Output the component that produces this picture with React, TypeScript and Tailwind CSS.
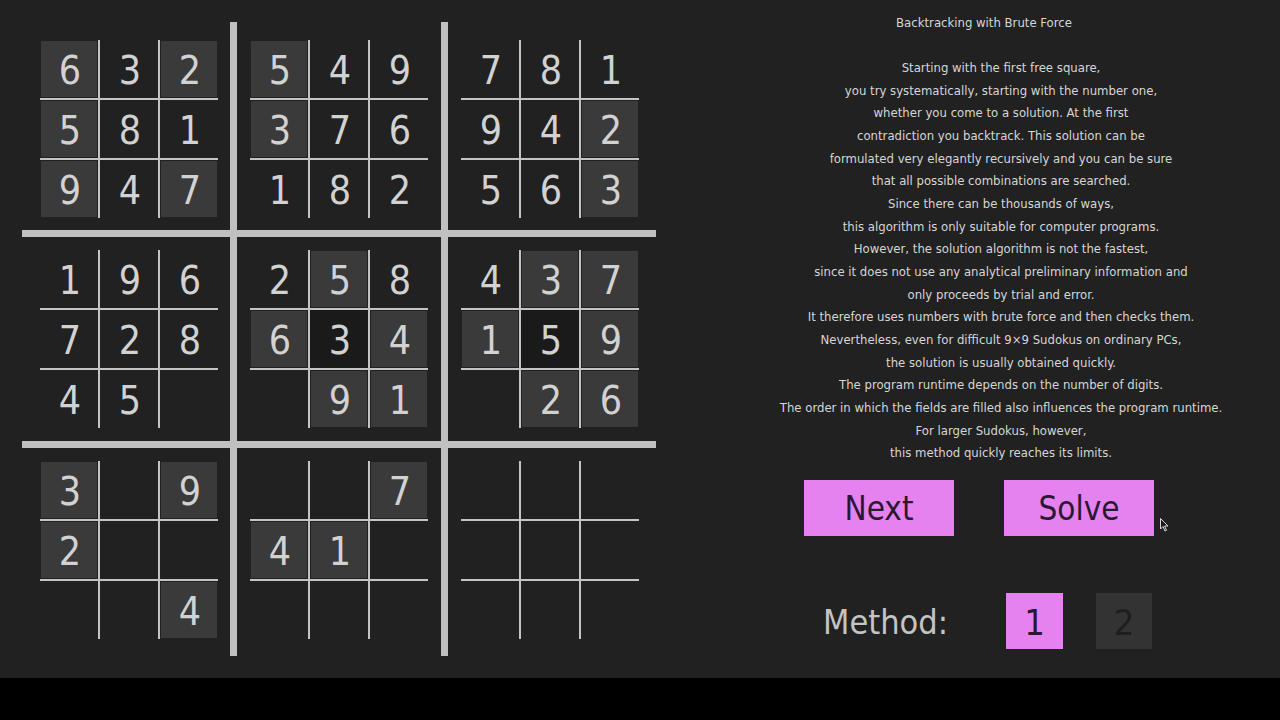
const blocks: string[][] = [
  ["6*", "3", "2*", "5*", "8", "1", "9*", "4", "7*"],
  ["5*", "4", "9", "3*", "7", "6", "1", "8", "2"],
  ["7", "8", "1", "9", "4", "2*", "5", "6", "3*"],
  ["1", "9", "6", "7", "2", "8", "4", "5", ""],
  ["2", "5*", "8", "6*", "3!", "4*", "", "9*", "1*"],
  ["4", "3*", "7*", "1*", "5!", "9*", "", "2*", "6*"],
  ["3*", "", "9*", "2*", "", "", "", "", "4*"],
  ["", "", "7*", "4*", "1*", "", "", "", ""],
  ["", "", "", "", "", "", "", "", ""],
];

const text = [
  "Starting with the first free square,",
  "you try systematically, starting with the number one,",
  "whether you come to a solution. At the first",
  "contradiction you backtrack. This solution can be",
  "formulated very elegantly recursively and you can be sure",
  "that all possible combinations are searched.",
  "Since there can be thousands of ways,",
  "this algorithm is only suitable for computer programs.",
  "However, the solution algorithm is not the fastest,",
  "since it does not use any analytical preliminary information and",
  "only proceeds by trial and error.",
  "It therefore uses numbers with brute force and then checks them.",
  "Nevertheless, even for difficult 9×9 Sudokus on ordinary PCs,",
  "the solution is usually obtained quickly.",
  "The program runtime depends on the number of digits.",
  "The order in which the fields are filled also influences the program runtime.",
  "For larger Sudokus, however,",
  "this method quickly reaches its limits.",
];

const Block = ({ cells, pad }: { cells: string[]; pad: string }) => (
  <div className={pad}>
    <div className="grid grid-cols-[58px_58px_58px] grid-rows-[58px_58px_58px] gap-[2px] bg-[#c4c4c4] w-fit">
      {cells.map((c, i) => {
        const given = c.endsWith("*");
        const dark = c.endsWith("!");
        const digit = c.replace("*", "").replace("!", "");
        return (
          <div key={i} className={dark ? "bg-[#1a1a1a]" : "bg-[#212121]"}>
            <div
              className={`m-[1px] h-[56px] pt-[4px] pl-[2px] flex items-center justify-center text-[39px] text-[#d2d2d2] ${
                given ? "bg-[#3a3a3a]" : ""
              }`}
            >
              {digit}
            </div>
          </div>
        );
      })}
    </div>
  </div>
);

const Board = () => {
  const padX = ["pl-[18px]", "pl-[13px]", "pl-[13px]"];
  const padY = ["pt-[18px]", "pt-[13px]", "pt-[13px]"];
  const rows = [0, 1, 2];
  return (
    <div className="grid grid-cols-[208px_7px_204px_7px_208px] grid-rows-[208px_7px_204px_7px_208px]">
      {rows.map((r) => (
        <>
          {r > 0 && <div key={`h${r}`} className="col-span-5 bg-[#c0c0c0]" />}
          {rows.map((c) => (
            <>
              {c > 0 && <div key={`v${r}${c}`} className="bg-[#c0c0c0]" />}
              <Block key={`b${r}${c}`} cells={blocks[r * 3 + c]} pad={`${padX[c]} ${padY[r]}`} />
            </>
          ))}
        </>
      ))}
    </div>
  );
};

export default function App() {
  return (
    <div
      className="w-[1280px] h-[720px] bg-black overflow-hidden"
      style={{ fontFamily: '"Liberation Sans Narrow", "DejaVu Sans Condensed", "Liberation Sans", sans-serif' }}
    >
      <div className="relative h-[678px] bg-[#212121] flex">
        <div className="pl-[22px] pt-[22px]">
          <Board />
        </div>

        <div className="flex-1 flex flex-col text-[#d6d6d6]">
          <div className="pl-[32px] pt-[12px] text-center text-[13px] leading-[22px]">
            Backtracking with Brute Force
          </div>
          <div className="pl-[66px] mt-[23px] text-center text-[13px] leading-[22.65px]">
            {text.map((t, i) => (
              <div key={i}>{t}</div>
            ))}
          </div>

          <div className="mt-[15px] ml-[148px] flex gap-[50px]">
            <button className="w-[150px] h-[56px] pt-[2px] bg-[#e682f0] text-[#2a1830] text-[33px] flex items-center justify-center">
              Next
            </button>
            <button className="w-[150px] h-[56px] pt-[2px] bg-[#e682f0] text-[#2a1830] text-[33px] flex items-center justify-center">
              Solve
            </button>
          </div>

          <div className="mt-[57px] ml-[167px] flex items-center">
            <span className="w-[183px] pt-[4px] text-[34px] text-[#c4c4c4]">Method:</span>
            <button className="w-[57px] h-[56px] pt-[4px] bg-[#e682f0] text-[#2a1830] text-[36px] flex items-center justify-center">
              1
            </button>
            <button className="ml-[33px] w-[56px] h-[56px] pt-[4px] bg-[#333333] text-[#1e1e1e] text-[36px] flex items-center justify-center">
              2
            </button>
          </div>
        </div>

        <svg className="absolute left-[1160px] top-[518px]" width="9" height="14" viewBox="0 0 9 14">
          <path d="M0.5 0.5 L0.5 11 L3 8.5 L5 13 L6.5 12.3 L4.6 8 L8 8 Z" fill="#1a1a1a" stroke="#d8d8d8" strokeWidth="1" />
        </svg>
      </div>
    </div>
  );
}
